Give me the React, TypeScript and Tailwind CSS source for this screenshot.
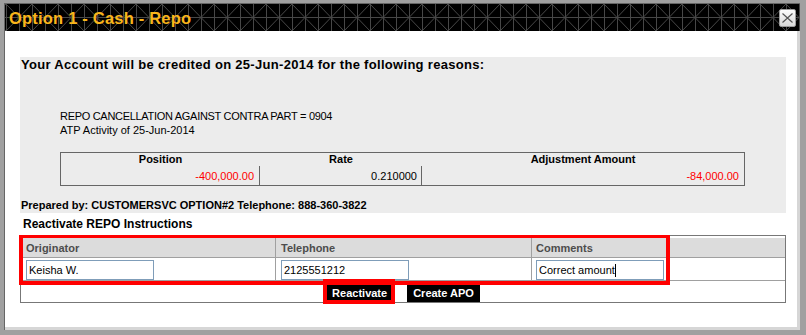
import React from "react";

const rows = [
  { label: "Originator", value: "Keisha W.", w: "w-[255px]" },
  { label: "Telephone", value: "2125551212", w: "w-[256px]" },
];

export default function App() {
  return (
    <div className="w-[806px] h-[335px] bg-[#a0a0a0] pt-[3px] pl-[4px] pr-[6px] pb-[5px] font-['Liberation_Sans',Arial,sans-serif] text-black">
      <div className="flex flex-col h-full border-l border-t border-[#666]">
        {/* title bar */}
        <div className="relative h-[27px] shrink-0 bg-black flex items-center justify-between pl-[4px] pr-[4px] overflow-hidden">
          <svg className="absolute inset-0 w-full h-full">
            <defs>
              <pattern id="hx" x="1" y="0" width="26" height="27" patternUnits="userSpaceOnUse">
                <path
                  d="M0 0L26 27M26 0L0 27M0.5 0V27M13.5 0V27M0 13.5H26"
                  stroke="#474747"
                  strokeWidth="1"
                  fill="none"
                />
              </pattern>
            </defs>
            <rect width="100%" height="100%" fill="url(#hx)" />
          </svg>
          <span className="relative text-[16.5px] leading-[20px] tracking-[0.2px] font-bold text-[#f9b51b]">
            Option 1 - Cash - Repo
          </span>
          <button className="relative w-[17px] h-[18px] flex items-center justify-center bg-gradient-to-b from-[#fbfbfb] to-[#d9d9d9] border border-[#9c9c9c] rounded-[2px]">
            <svg width="11" height="10" viewBox="0 0 11 10">
              <path d="M0.5 0.5L10.5 9.5M10.5 0.5L0.5 9.5" stroke="#555" strokeWidth="1.2" />
            </svg>
          </button>
        </div>

        {/* body */}
        <div className="flex-1 bg-white border-r-[3px] border-b-[3px] border-[#d6d6d6] pl-[15px] pr-[11px] pt-[26px]">
          <div className="bg-[#ececec] pl-[1px] pb-[1px] flex flex-col">
            <p className="text-[13px] leading-[16px] tracking-[0.3px] font-bold">
              Your Account will be credited on 25-Jun-2014 for the following reasons:
            </p>
            <div className="mt-[36px] pl-[39px] text-[11px] leading-[14px]">
              <p className="tracking-[-0.3px]">REPO CANCELLATION AGAINST CONTRA PART = 0904</p>
              <p>ATP Activity of 25-Jun-2014</p>
            </div>
            <div className="mt-[15px] ml-[39px] w-[685px] border border-[#666] text-[11px]">
              <div className="flex h-[13px] leading-[13px] font-bold">
                <div className="w-[199px] text-center">Position</div>
                <div className="w-[162px] text-center">Rate</div>
                <div className="flex-1 text-center">Adjustment Amount</div>
              </div>
              <div className="flex h-[19px] leading-[14px]">
                <div className="w-[199px] border-r border-[#666] text-right pr-[5px] pt-[3px] text-[#ff0000]">
                  -400,000.00
                </div>
                <div className="w-[162px] border-r border-[#666] text-right pr-[4px] pt-[3px]">
                  0.210000
                </div>
                <div className="flex-1 text-right pr-[5px] pt-[3px] text-[#ff0000]">-84,000.00</div>
              </div>
            </div>
            <p className="mt-[12px] text-[11px] leading-[14px] font-bold">
              Prepared by: CUSTOMERSVC OPTION#2 Telephone: 888-360-3822
            </p>
          </div>

          <p className="mt-[4px] pl-[3px] text-[12px] leading-[15px] font-bold">
            Reactivate REPO Instructions
          </p>

          <div className="relative mt-[3px] border border-[#777] pt-[2px] text-[11px]">
            <div className="flex h-[20px] bg-[#dcdcdc] border-b border-[#a0a0a0] font-bold text-[#4d4d4d] leading-[20px]">
              {rows.map((r) => (
                <div key={r.label} className={`${r.w} border-r border-[#a0a0a0] pl-[5px]`}>
                  {r.label}
                </div>
              ))}
              <div className="flex-1 pl-[4px]">Comments</div>
            </div>
            <div className="flex h-[23px] border-b border-[#a0a0a0]">
              {rows.map((r) => (
                <div key={r.label} className={`${r.w} border-r border-[#a0a0a0] pl-[5px] pt-[2px]`}>
                  <div className="w-[128px] h-[20px] border border-[#7f9db9] pl-[2px] leading-[18px]">
                    {r.value}
                  </div>
                </div>
              ))}
              <div className="flex-1 pl-[4px] pt-[2px]">
                <div className="w-[128px] h-[20px] border border-[#7f9db9] pl-[2px] leading-[18px] flex items-center">
                  Correct amount
                  <span className="inline-block w-px h-[13px] bg-black" />
                </div>
              </div>
            </div>
            <div className="flex justify-center gap-[14px] pt-[3px] h-[21px]">
              <button className="relative h-[18px] px-[6px] bg-black text-white font-bold leading-[18px]">
                Reactivate
                <span className="absolute -left-[3px] -right-[2px] -top-[5px] -bottom-[2px] border-[4px] border-[#f00] pointer-events-none" />
              </button>
              <button className="h-[18px] px-[6px] bg-black text-white font-bold leading-[18px]">
                Create APO
              </button>
            </div>

            {/* annotation box */}
            <div className="absolute -left-[2px] -top-[1px] w-[651px] h-[50px] border-[4px] border-t-[3px] border-[#f00] pointer-events-none" />
          </div>
        </div>
      </div>
    </div>
  );
}
